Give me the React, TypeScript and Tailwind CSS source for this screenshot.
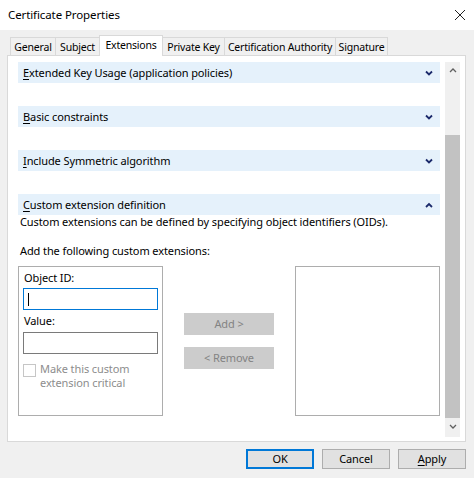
import type { ReactNode } from "react";

const tabs = [
  { label: "General", width: "w-[46px]" },
  { label: "Subject", width: "w-[45px]" },
  { label: "Extensions", width: "w-[64px]" },
  { label: "Private Key", width: "w-[63px]" },
  { label: "Certification Authority", width: "w-[112px]" },
  { label: "Signature", width: "w-[53px]" },
];

function Chevron({ up = false }: { up?: boolean }) {
  return (
    <svg width="8" height="6" viewBox="0 0 8 6" className="text-[#1b2a6b]">
      <path
        d={up ? "M1 5 L4 2 L7 5" : "M1 1.5 L4 4.5 L7 1.5"}
        fill="none"
        stroke="currentColor"
        strokeWidth="1.8"
      />
    </svg>
  );
}

function SectionHeader({ access, rest, up = false }: { access: string; rest: string; up?: boolean }) {
  return (
    <div className="flex h-[21px] items-center justify-between bg-[#e5f1fb] pl-[5px] pr-[7px]">
      <span>
        <span className="underline underline-offset-2">{access}</span>
        {rest}
      </span>
      <Chevron up={up} />
    </div>
  );
}

function DisabledButton({ children }: { children: ReactNode }) {
  return (
    <div className="flex h-[22px] w-[90px] items-center justify-center bg-[#cccccc] text-[#838383]">
      {children}
    </div>
  );
}

function DialogButton({ children, focused = false }: { children: ReactNode; focused?: boolean }) {
  return (
    <button
      type="button"
      className={`flex h-[20px] w-[68px] items-center justify-center bg-[#e1e1e1] ${
        focused ? "border-2 border-[#0078d7]" : "border border-[#adadad]"
      }`}
    >
      {children}
    </button>
  );
}

export default function App() {
  return (
    <div
      className="flex h-[478px] w-[474px] flex-col overflow-hidden bg-[#f0f0f0] text-[11px] leading-[14px] tracking-[-0.1px] text-black"
      style={{ fontFamily: '"Noto Sans", "Open Sans", sans-serif' }}
    >
      {/* title bar */}
      <div className="flex h-[30px] shrink-0 items-center justify-between bg-white pl-[8px] pr-[8px] text-[11.5px]">
        <span>Certificate Properties</span>
        <svg width="12" height="12" viewBox="0 0 12 12">
          <path d="M1 1 L11 11 M11 1 L1 11" stroke="#222" strokeWidth="1" />
        </svg>
      </div>

      <div className="flex flex-1 flex-col pl-[7px] pr-[8px]">
        {/* tabs */}
        <div className="flex h-[25px] items-end pl-[3px] text-[10.5px] tracking-[-0.2px]">
          {tabs.map((tab) =>
            tab.label === "Extensions" ? (
              <div
                key={tab.label}
                className={`relative z-10 -mb-px -ml-px flex h-[21px] items-center justify-center border border-b-0 border-[#d9d9d9] bg-white pb-[2px] ${tab.width}`}
              >
                {tab.label}
              </div>
            ) : (
              <div
                key={tab.label}
                className={`-ml-px flex h-[18px] items-center justify-center border border-b-0 border-[#d9d9d9] bg-[#f0f0f0] first:ml-0 ${tab.width}`}
              >
                {tab.label}
              </div>
            )
          )}
        </div>

        {/* tab panel */}
        <div className="flex h-[387px] border border-[#d9d9d9] bg-white pb-[4px] pl-[10px] pr-[5px] pt-[6px]">
          <div className="flex w-[422px] flex-col">
            <SectionHeader access="E" rest="xtended Key Usage (application policies)" />
            <div className="h-[23px]" />
            <SectionHeader access="B" rest="asic constraints" />
            <div className="h-[23px]" />
            <SectionHeader access="I" rest="nclude Symmetric algorithm" />
            <div className="h-[23px]" />
            <SectionHeader access="C" rest="ustom extension definition" up />
            <p className="pl-[2px]">Custom extensions can be defined by specifying object identifiers (OIDs).</p>
            <p className="mt-[15px] pl-[2px]">Add the following custom extensions:</p>

            <div className="mt-[8px] flex h-[150px]">
              <div className="flex w-[145px] flex-col border border-[#adadad] px-[4px] pt-[4px]">
                <label className="pl-px">Object ID:</label>
                <div className="mt-[3px] flex h-[22px] items-center border border-[#0078d7] pl-[4px]">
                  <div className="h-[13px] w-px bg-black" />
                </div>
                <label className="mt-[4px] pl-px">Value:</label>
                <div className="mt-[4px] h-[22px] border border-[#7a7a7a]" />
                <div className="mt-[8px] flex gap-[4px] text-[#8d8d8d]">
                  <div className="mt-[2px] h-[13px] w-[13px] shrink-0 border border-[#c6c6c6]" />
                  <span className="leading-[14px]">
                    Make this custom
                    <br />
                    extension critical
                  </span>
                </div>
              </div>

              <div className="flex flex-1 flex-col items-center justify-center gap-[12px]">
                <DisabledButton>Add &gt;</DisabledButton>
                <DisabledButton>&lt; Remove</DisabledButton>
              </div>

              <div className="w-[145px] border border-[#adadad]" />
            </div>
          </div>

          {/* scrollbar */}
          <div className="ml-[5px] flex w-[15px] flex-col items-center bg-[#f0f0f0]">
            <div className="flex h-[17px] items-center">
              <svg width="8" height="5" viewBox="0 0 8 5">
                <path d="M1 4 L4 1 L7 4" fill="none" stroke="#606060" strokeWidth="1.3" />
              </svg>
            </div>
            <div className="mt-[56px] h-[283px] w-full bg-[#c2c2c2]" />
            <div className="flex h-[17px] items-center">
              <svg width="8" height="5" viewBox="0 0 8 5">
                <path d="M1 1 L4 4 L7 1" fill="none" stroke="#606060" strokeWidth="1.3" />
              </svg>
            </div>
          </div>
        </div>

        {/* dialog buttons */}
        <div className="mt-[7px] flex justify-end gap-[8px]">
          <DialogButton focused>OK</DialogButton>
          <DialogButton>Cancel</DialogButton>
          <DialogButton>
            <span>
              <span className="underline underline-offset-2">A</span>pply
            </span>
          </DialogButton>
        </div>
      </div>
    </div>
  );
}
